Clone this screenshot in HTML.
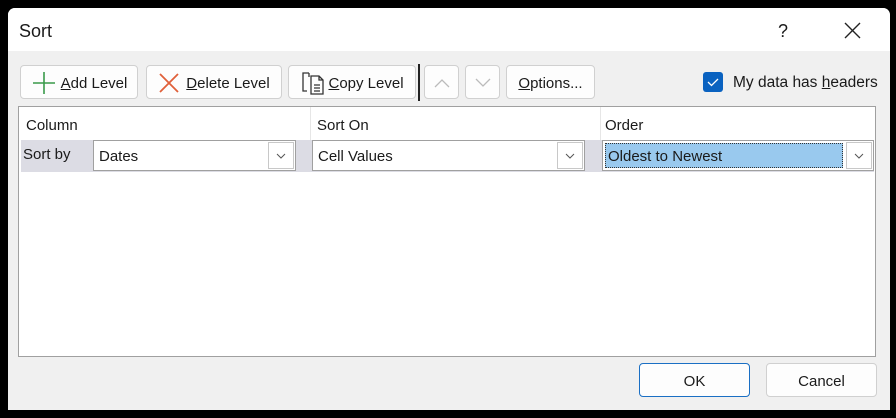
<!DOCTYPE html><html><head><style>
body{margin:0;width:896px;height:418px;background:#000;position:relative;overflow:hidden;font-family:"Liberation Sans",sans-serif;font-size:15px;color:#1a1a1a}
.a{position:absolute}
.dlg{left:8px;top:8px;width:882px;height:402px;background:#f0f0f0;border-radius:7px 7px 0 0;overflow:hidden}
.tb{left:0;top:0;width:882px;height:43px;background:#fff}
.btn{position:absolute;background:#fdfdfd;border:1px solid #d0d0d0;border-radius:4px;box-sizing:border-box;display:flex;align-items:center;justify-content:center;font-size:15px;padding-top:2px}
.combo{position:absolute;background:#fff;border:1px solid #a0a0a0;box-sizing:border-box;font-size:15px;padding-left:5px;line-height:31px}
.dd{position:absolute;right:1px;top:1px;width:26px;height:27px;border:1px solid #c8c8c8;box-sizing:border-box;background:#fff}
u{text-decoration:underline}
</style></head><body>
<div class="a dlg">
<div class="a tb"></div>
<div class="a" style="left:11px;top:13px;font-size:18px">Sort</div>
<div class="a" style="left:770px;top:13px;font-size:18px">?</div>
<svg class="a" style="left:836px;top:14px" width="17" height="17"><path d="M1 1L16 16M16 1L1 16" stroke="#222" stroke-width="1.4"/></svg>
<div class="btn" style="left:12px;top:57px;width:118px;height:34px"><svg width="26" height="26" style="margin-right:4px"><path d="M13 2V24M2 13H24" stroke="#3a9a4a" stroke-width="1.6"/></svg><u>A</u>dd Level</div>
<div class="btn" style="left:138px;top:57px;width:136px;height:34px"><svg width="22" height="22" style="margin-right:6px"><path d="M2 2L20 20M20 2L2 20" stroke="#e0603a" stroke-width="1.8"/></svg><u>D</u>elete Level</div>
<div class="btn" style="left:280px;top:57px;width:128px;height:34px"><svg width="26" height="26" style="margin-right:2px" fill="none" stroke="#333" stroke-width="1.3"><path d="M9 3H3V21H7M9 3V7M11 6H19L23 10V24H11Z M19 6V10H23 M14 15H20M14 18H20M14 21H20"/></svg><u>C</u>opy Level</div>
<div class="a" style="left:410px;top:56px;width:2px;height:37px;background:#222"></div>
<div class="btn" style="left:416px;top:57px;width:35px;height:34px"><svg width="16" height="10"><path d="M1 9L8 2L15 9" stroke="#bbb" fill="none" stroke-width="1.3"/></svg></div>
<div class="btn" style="left:457px;top:57px;width:35px;height:34px"><svg width="16" height="10"><path d="M1 1L8 8L15 1" stroke="#bbb" fill="none" stroke-width="1.3"/></svg></div>
<div class="btn" style="left:498px;top:57px;width:89px;height:34px"><u>O</u>ptions...</div>
<div class="a" style="left:695px;top:64px;width:20px;height:20px;background:#0a62c0;border-radius:3px"><svg width="20" height="20"><path d="M5 10L8.5 13.5L15 7" stroke="#fff" fill="none" stroke-width="1.3"/></svg></div>
<div class="a" style="left:725px;top:66px;font-size:15.5px">My data has <u>h</u>eaders</div>
<div class="a" style="left:10px;top:98px;width:858px;height:251px;background:#fff;border:1px solid #a0a0a0;box-sizing:border-box"></div>
<div class="a" style="left:302px;top:99px;width:1px;height:33px;background:#e6e6e6"></div>
<div class="a" style="left:592px;top:99px;width:1px;height:33px;background:#e6e6e6"></div>
<div class="a" style="left:18px;top:109px">Column</div>
<div class="a" style="left:309px;top:109px">Sort On</div>
<div class="a" style="left:597px;top:109px">Order</div>
<div class="a" style="left:13px;top:132px;width:853px;height:32px;background:#dcdce4"></div>
<div class="a" style="left:15px;top:138px">Sort by</div>
<div class="combo" style="left:85px;top:132px;width:203px;height:31px">Dates<div class="dd"><svg width="24" height="25"><path d="M8 11L12 15L16 11" stroke="#555" fill="none"/></svg></div></div>
<div class="combo" style="left:304px;top:132px;width:273px;height:31px">Cell Values<div class="dd"><svg width="24" height="25"><path d="M8 11L12 15L16 11" stroke="#555" fill="none"/></svg></div></div>
<div class="combo" style="left:594px;top:132px;width:272px;height:31px;padding-left:0"><div style="position:absolute;left:2px;top:2px;width:238px;height:25px;background:#99c9ee;border:1px dotted #333;box-sizing:border-box;line-height:25px;padding-left:2px">Oldest to Newest</div><div class="dd"><svg width="24" height="25"><path d="M8 11L12 15L16 11" stroke="#555" fill="none"/></svg></div></div>
<div class="btn" style="left:631px;top:355px;width:111px;height:34px;border:1px solid #1a6fc4;padding-top:3px">OK</div>
<div class="btn" style="left:758px;top:355px;width:111px;height:34px;padding-top:3px">Cancel</div>
</div>
</body></html>
